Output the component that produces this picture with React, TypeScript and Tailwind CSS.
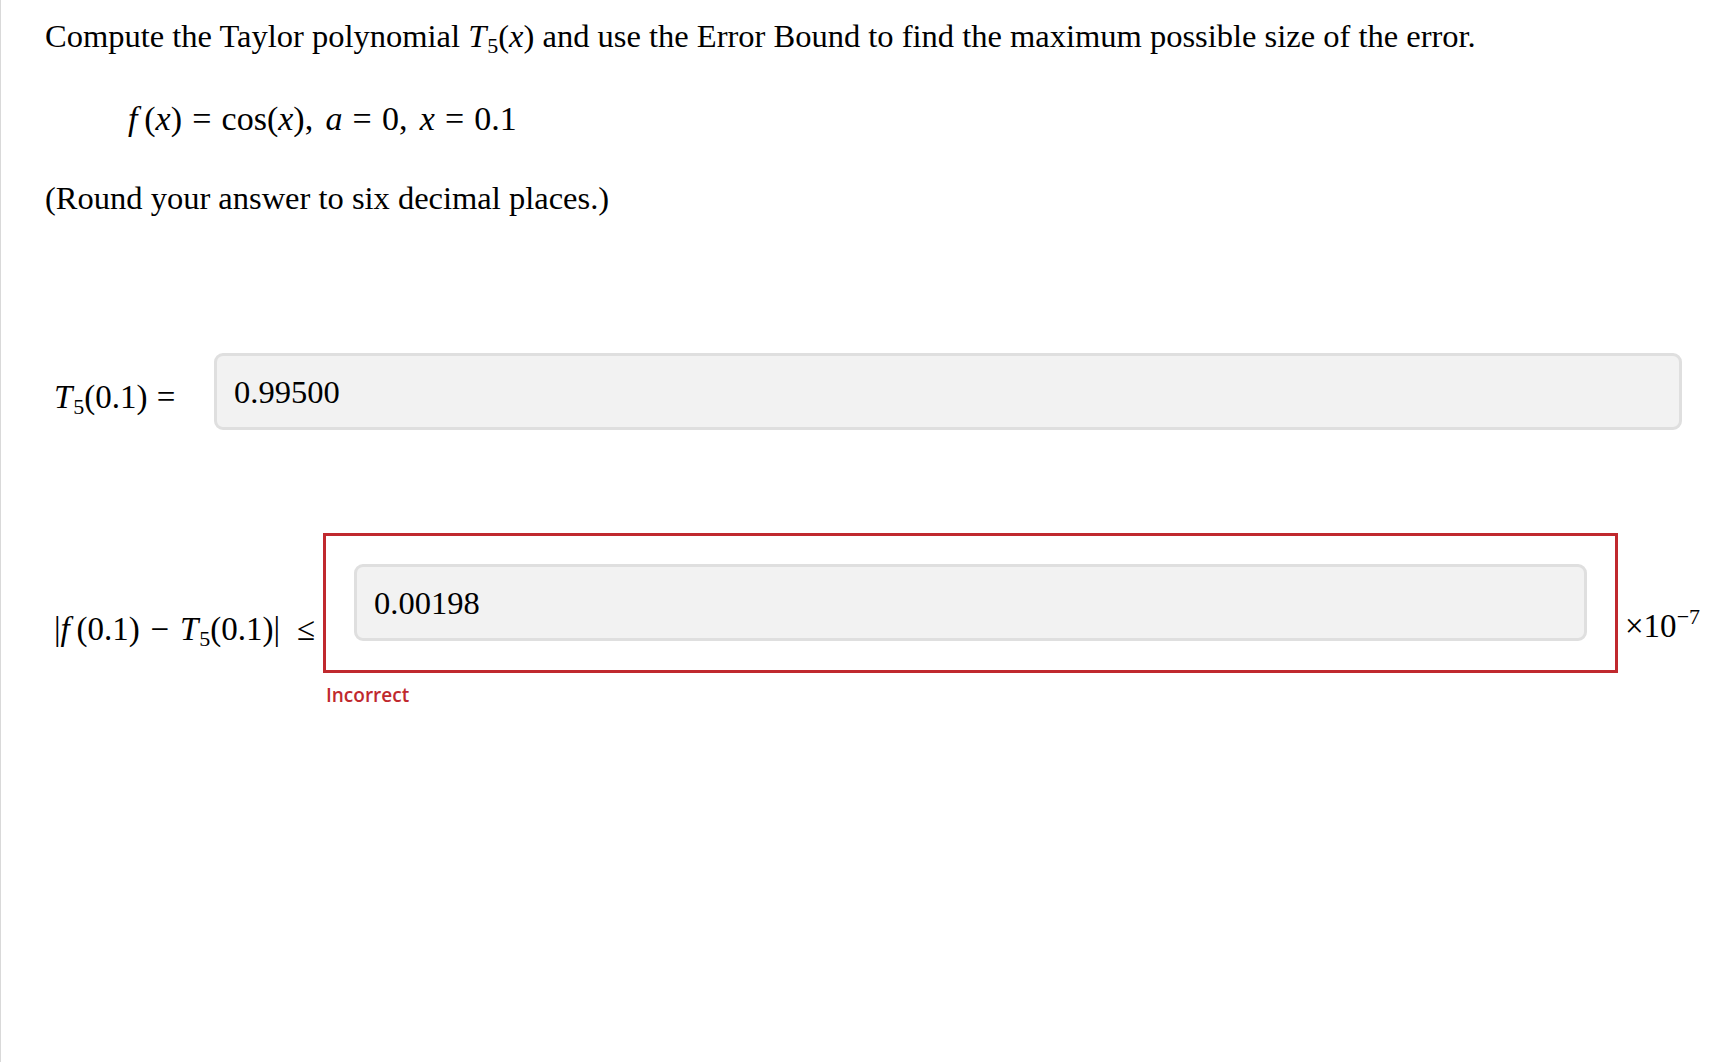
import React from "react";

const serif = "[font-family:'Liberation_Serif','Times_New_Roman',serif]";

function T5() {
  return (
    <span>
      <i>T</i>
      <span className="text-[22px] relative top-[6px] ml-[1px]">5</span>
    </span>
  );
}

function Rel({ c }: { c: string }) {
  return <span className="mx-[0.3em]">{c}</span>;
}

export default function App() {
  return (
    <div className={`min-h-screen w-full bg-white border-l border-[#d9d9d9] text-black ${serif}`}>
      <div className="pl-[44px] pt-[18px]">
        <p className="text-[32.5px] leading-[36px] whitespace-nowrap">
          Compute the Taylor polynomial <T5 />(<i>x</i>) and use the Error Bound to find the maximum possible size of the error.
        </p>
        <p className="mt-[43px] ml-[83px] text-[34px] leading-[36px] whitespace-nowrap">
          <i>f</i>
          <span className="ml-[0.2em]">(</span>
          <i>x</i>)<Rel c="=" />cos(<i>x</i>),<span className="ml-[0.36em]" />
          <i>a</i>
          <Rel c="=" />
          0,<span className="ml-[0.36em]" />
          <i>x</i>
          <Rel c="=" />
          0.1
        </p>
        <p className="mt-[43px] text-[32.5px] leading-[36px] whitespace-nowrap">
          (Round your answer to six decimal places.)
        </p>

        <div className="mt-[137px] flex items-start">
          <div className="w-[160px] shrink-0 ml-[9px] mt-[26px] text-[33px] leading-[36px] whitespace-nowrap">
            <T5 />(0.1)<span className="ml-[0.28em]">=</span>
          </div>
          <div className="w-[1468px] h-[77px] border-[3px] border-[#dfdfdf] rounded-[9px] bg-[#f2f2f2] pl-[17px] flex items-center text-[32.5px] leading-[36px]">
            0.99500
          </div>
        </div>

        <div className="mt-[103px] flex items-start">
          <div className="w-[269px] shrink-0 ml-[9px] mt-[78px] text-[33px] leading-[36px] whitespace-nowrap">
            |<i>f</i>
            <span className="ml-[0.2em]">(</span>0.1)<span className="mx-[0.33em]">−</span>
            <T5 />(0.1)|<span className="ml-[0.5em]">≤</span>
          </div>
          <div className="flex flex-col shrink-0">
            <div className="w-[1295px] h-[140px] border-[3px] border-[#c0292e] p-[28px]">
              <div className="w-[1233px] h-[77px] border-[3px] border-[#dfdfdf] rounded-[9px] bg-[#f2f2f2] pl-[17px] flex items-center text-[32.5px] leading-[36px]">
                0.00198
              </div>
            </div>
            <div className="mt-[9px] pl-[3px] [font-family:'Open_Sans',sans-serif] font-semibold text-[19px] leading-[26px] text-[#c0292e]">
              Incorrect
            </div>
          </div>
          <div className="ml-[7px] mt-[75px] text-[33px] leading-[36px] whitespace-nowrap">
            ×10<span className="text-[22px] relative -top-[13px]">−7</span>
          </div>
        </div>
      </div>
    </div>
  );
}
